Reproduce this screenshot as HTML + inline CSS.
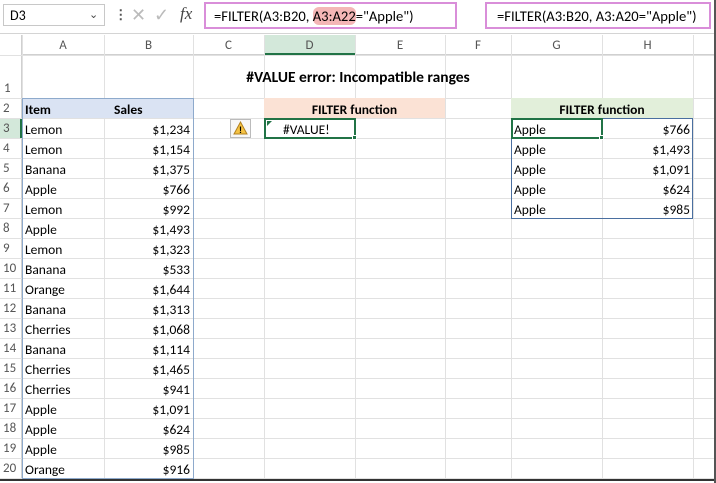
<!DOCTYPE html><html><head><style>
*{margin:0;padding:0;box-sizing:border-box}
body{width:716px;height:483px;overflow:hidden;background:#fff;font-family:Calibri,"Liberation Sans",sans-serif;font-size:13.5px;color:#000;position:relative}
.a{position:absolute}
.c{position:absolute;white-space:nowrap;line-height:20px;margin-top:2px}
.r{text-align:right}
.hdr{color:#555;font-size:13px;text-align:center;line-height:20px;margin-top:1px}
</style></head><body>
<div class="a" style="left:0;top:0;width:716px;height:34px;background:#fff;border-bottom:1px solid #d4d4d4"></div>
<div class="a" style="left:3px;top:4px;width:102px;height:22px;border:1px solid #c8c8c8"></div>
<div class="c" style="left:10px;top:4px;font-size:14px">D3</div>
<div class="c" style="left:89px;top:3px;font-size:11px;color:#444">&#8964;</div>
<div class="c" style="left:114px;top:3px;color:#555;font-weight:bold">&#8942;</div>
<div class="c" style="left:131px;top:3px;color:#bbb;font-size:18px">&#10005;</div>
<div class="c" style="left:154px;top:3px;color:#bbb;font-size:18px">&#10003;</div>
<div class="c" style="left:180px;top:2px;color:#444;font-family:'Liberation Serif',serif;font-style:italic;font-size:17px">fx</div>
<div class="a" style="left:204px;top:2px;width:253px;height:27px;border:2px solid #d98ed9"></div>
<div class="c" style="left:214px;top:4px;font-size:14.6px">=FILTER(A3:B20, <span style="background:#f4b6b6;border-radius:6px">A3:A22</span>="Apple")</div>
<div class="a" style="left:485px;top:2px;width:226px;height:27px;border:2px solid #d98ed9"></div>
<div class="c" style="left:497px;top:4px;font-size:14.6px">=FILTER(A3:B20, A3:A20="Apple")</div>
<div class="a" style="left:0;top:35px;width:716px;height:20px;background:#fff;border-bottom:1px solid #d0d0d0"></div>
<div class="a" style="left:264px;top:35px;width:91px;height:20px;background:#d3e8da;border-bottom:2px solid #217346"></div>
<div class="a" style="left:0;top:35px;width:22px;height:448px;background:#fff;border-right:1px solid #d0d0d0"></div>
<div class="a" style="left:0;top:118px;width:22px;height:20px;background:#d3e8da;border-right:2px solid #217346"></div>
<div id="g"></div>
<div class="a" style="left:22px;top:98px;width:171px;height:20px;background:#dae3f3"></div>
<div class="a" style="left:264px;top:98px;width:181px;height:20px;background:#fbe2d5"></div>
<div class="a" style="left:511px;top:98px;width:182px;height:20px;background:#e2efda"></div>
<div class="a" style="left:22px;top:98px;width:172px;height:381px;border:1px solid #8eaacc"></div>
<div class="a" style="left:511px;top:118px;width:182px;height:101px;border:1px solid #4a6fa0"></div>
<div class="a" style="left:0;top:479px;width:716px;height:4px;background:#fff;border-top:2px solid #333"></div>
<div class="a" style="left:714px;top:0;width:2px;height:483px;background:#555"></div>
<div class="c" style="left:193px;top:66px;width:330px;text-align:center;font-weight:bold;font-size:15.5px">#VALUE error: Incompatible ranges</div>
<div class="c" style="left:25px;top:98px;font-weight:bold">Item</div>
<div class="c" style="left:114px;top:98px;font-weight:bold">Sales</div>
<div class="c" style="left:264px;top:98px;width:181px;text-align:center;font-weight:bold">FILTER function</div>
<div class="c" style="left:511px;top:98px;width:182px;text-align:center;font-weight:bold">FILTER function</div>
<div class="a" style="left:230px;top:119px;width:21px;height:19px;border:1px solid #bbb;background:#f7f7f7"></div>
<svg class="a" style="left:233px;top:121px" width="15" height="14"><polygon points="7.5,1 14,13 1,13" fill="#f5c242" stroke="#b08020"/><text x="6" y="12" font-size="9" font-weight="bold" font-family="Liberation Sans">!</text></svg>
<div class="a" style="left:264px;top:118px;width:92px;height:21px;border:2px solid #217346"></div>
<div class="a" style="left:352px;top:135px;width:5px;height:5px;background:#217346;border:1px solid #fff"></div>
<div class="a" style="left:267px;top:121px;width:0;height:0;border-top:5px solid #217346;border-right:5px solid transparent"></div>
<div class="c" style="left:283px;top:118px">#VALUE!</div>
<div class="a" style="left:511px;top:118px;width:92px;height:21px;border:2px solid #217346"></div>
<div class="a" style="left:599px;top:135px;width:5px;height:5px;background:#217346;border:1px solid #fff"></div>
<div id="d"></div>
<script>
var g='';
var cols=[22,104,193,264,355,445,511,602,693];
var names=['A','B','C','D','E','F','G','H'];
for(var i=0;i<cols.length;i++){g+='<div class="a" style="left:'+cols[i]+'px;top:35px;width:1px;height:448px;background:#e1e1e1"></div>';}
for(var i=0;i<8;i++){g+='<div class="c hdr" style="left:'+cols[i]+'px;top:35px;width:'+(cols[i+1]-cols[i])+'px">'+names[i]+'</div>';}
var rt=[55,98];for(var r=3;r<=21;r++)rt.push(118+(r-3)*20);
for(var i=0;i<rt.length;i++){g+='<div class="a" style="left:0;top:'+rt[i]+'px;width:716px;height:1px;background:#e1e1e1"></div>';}
g+='<div class="c hdr" style="left:0;top:78px;width:22px;text-align:left;padding-left:4px">1</div>';
for(var r=2;r<=20;r++){g+='<div class="c hdr" style="left:0;top:'+(r==2?98:118+(r-3)*20)+'px;width:22px;text-align:left;padding-left:3px">'+r+'</div>';}
document.getElementById('g').outerHTML=g;
var data=[['Lemon','$1,234'],['Lemon','$1,154'],['Banana','$1,375'],['Apple','$766'],['Lemon','$992'],['Apple','$1,493'],['Lemon','$1,323'],['Banana','$533'],['Orange','$1,644'],['Banana','$1,313'],['Cherries','$1,068'],['Banana','$1,114'],['Cherries','$1,465'],['Cherries','$941'],['Apple','$1,091'],['Apple','$624'],['Apple','$985'],['Orange','$916']];
var d='';
for(var i=0;i<data.length;i++){var t=118+i*20;d+='<div class="c" style="left:25px;top:'+t+'px">'+data[i][0]+'</div><div class="c r" style="left:104px;top:'+t+'px;width:86px">'+data[i][1]+'</div>';}
var f=['$766','$1,493','$1,091','$624','$985'];
for(var i=0;i<5;i++){var t=118+i*20;d+='<div class="c" style="left:514px;top:'+t+'px">Apple</div><div class="c r" style="left:602px;top:'+t+'px;width:88px">'+f[i]+'</div>';}
document.getElementById('d').outerHTML=d;
</script>
</body></html>
